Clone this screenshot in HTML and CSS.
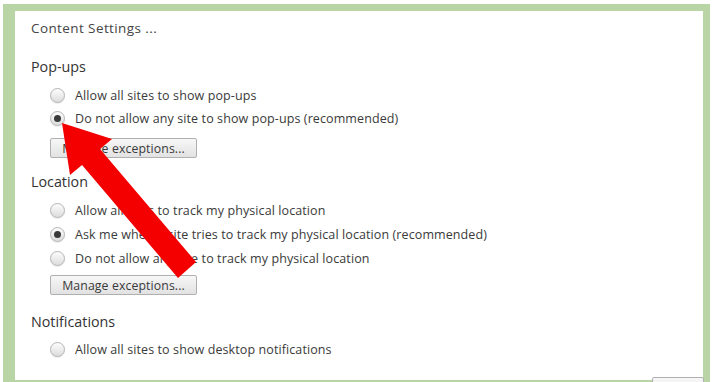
FILE: index.html
```html
<!DOCTYPE html>
<html lang="en">
<head>
    <meta charset="UTF-8">
    <meta name="viewport" content="width=device-width, initial-scale=1.0">
    <title>Content Settings</title>
    <link rel="stylesheet" href="styles.css">
</head>
<body>
    <div class="frame">
        <div class="page">
            <div class="title">Content Settings ...</div>

            <div class="section popups">
                <h2 class="heading">Pop-ups</h2>
                <label class="option"><span class="radio"></span>Allow all sites to show pop-ups</label>
                <label class="option"><span class="radio checked"></span>Do not allow any site to show pop-ups (recommended)</label>
                <button class="btn">Manage exceptions...</button>
            </div>

            <div class="section location">
                <h2 class="heading">Location</h2>
                <label class="option"><span class="radio"></span>Allow all sites to track my physical location</label>
                <label class="option"><span class="radio checked"></span>Ask me when a site tries to track my physical location (recommended)</label>
                <label class="option"><span class="radio"></span>Do not allow any site to track my physical location</label>
                <button class="btn">Manage exceptions...</button>
            </div>

            <div class="section notifications">
                <h2 class="heading">Notifications</h2>
                <label class="option"><span class="radio"></span>Allow all sites to show desktop notifications</label>
            </div>

            <button class="btn done">Done</button>
        </div>

        <!-- annotation arrow drawn over the page -->
        <svg class="arrow" width="719" height="382" viewBox="0 0 719 382">
            <polygon points="62,123 112,139 100,149 196,262 178,278 82,165 70,175" fill="#f50000"/>
        </svg>
    </div>
</body>
</html>
```

FILE: styles.css
```css
body {
    margin: 0;
    background-color: #fff;
    font-family: "Open Sans", Arial, sans-serif;
    color: #3c3c3c;
}

.frame {
    position: relative;
    width: 719px;
    height: 382px;
    overflow: hidden;
}

.page {
    position: relative;
    box-sizing: border-box;
    margin: 4px 0 0 3px;
    width: 707px;
    height: 378px;
    border-style: solid;
    border-color: #b9d5a5;
    border-width: 7px 7px 2px 12px;
    background-color: #fff;
    padding: 7px 0 0 16px;
}

.title {
    height: 20px;
    line-height: 20px;
    font-size: 13.5px;
    letter-spacing: 0.4px;
    color: #444;
}

.section {
    margin-top: 19px;
}

.location {
    margin-top: 14px;
}

.notifications {
    margin-top: 17px;
}

.heading {
    margin: 0 0 5px;
    height: 20px;
    line-height: 20px;
    font-size: 14.3px;
    font-weight: normal;
    color: #333;
}

.popups .heading {
    margin-bottom: 7px;
}

.location .heading {
    margin-bottom: 6px;
}

.option {
    display: flex;
    align-items: center;
    height: 23px;
    padding-left: 19px;
    font-size: 12.5px;
    letter-spacing: 0.1px;
    color: #3a3a3a;
}

.location .option,
.notifications .option {
    height: 24px;
}

.radio {
    box-sizing: border-box;
    display: flex;
    justify-content: center;
    align-items: center;
    width: 15px;
    height: 15px;
    margin-right: 10px;
    border: 1px solid #b4b4b4;
    border-radius: 50%;
    background: linear-gradient(#fdfdfd, #dcdcdc);
    box-shadow: 0 1px 1px rgba(0, 0, 0, 0.08);
}

.radio.checked::after {
    content: "";
    width: 7px;
    height: 7px;
    border-radius: 50%;
    background-color: #3a3a3a;
}

.btn {
    display: block;
    box-sizing: border-box;
    width: 147px;
    height: 20px;
    margin: 8px 0 0 19px;
    padding: 0;
    border: 1px solid #b0b0b0;
    border-radius: 2px;
    background: linear-gradient(#f7f7f7, #e2e2e2);
    font-family: "Open Sans", Arial, sans-serif;
    font-size: 12.3px;
    letter-spacing: 0.1px;
    color: #3a3a3a;
}

.location .btn {
    margin-top: 5px;
}

.done {
    position: absolute;
    left: 637px;
    top: 366px;
    width: 52px;
    height: 24px;
    margin: 0;
    padding-top: 4px;
    line-height: 14px;
}

.arrow {
    position: absolute;
    left: 0;
    top: 0;
}
```
